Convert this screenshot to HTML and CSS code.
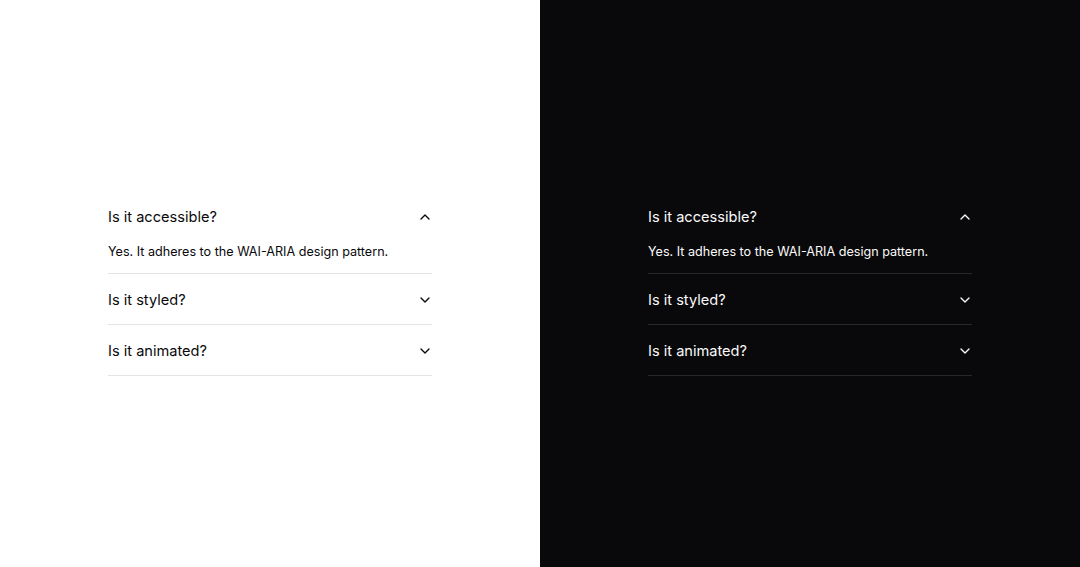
FILE: index.html
```html
<!DOCTYPE html>
<html>
<head>
<meta charset="utf-8">
<link rel="stylesheet" href="styles.css">
</head>
<body>
<div class="split">
  <div class="panel light">
    <div class="accordion">
      <div class="item open">
        <div class="trigger"><span>Is it accessible?</span>
          <svg class="chev" viewBox="0 0 24 24"><path d="m18 15-6-6-6 6"/></svg></div>
        <div class="content">Yes. It adheres to the WAI-ARIA design pattern.</div>
      </div>
      <div class="item">
        <div class="trigger"><span>Is it styled?</span>
          <svg class="chev" viewBox="0 0 24 24"><path d="m6 9 6 6 6-6"/></svg></div>
      </div>
      <div class="item">
        <div class="trigger"><span>Is it animated?</span>
          <svg class="chev" viewBox="0 0 24 24"><path d="m6 9 6 6 6-6"/></svg></div>
      </div>
    </div>
  </div>
  <div class="panel dark">
    <div class="accordion">
      <div class="item open">
        <div class="trigger"><span>Is it accessible?</span>
          <svg class="chev" viewBox="0 0 24 24"><path d="m18 15-6-6-6 6"/></svg></div>
        <div class="content">Yes. It adheres to the WAI-ARIA design pattern.</div>
      </div>
      <div class="item">
        <div class="trigger"><span>Is it styled?</span>
          <svg class="chev" viewBox="0 0 24 24"><path d="m6 9 6 6 6-6"/></svg></div>
      </div>
      <div class="item">
        <div class="trigger"><span>Is it animated?</span>
          <svg class="chev" viewBox="0 0 24 24"><path d="m6 9 6 6 6-6"/></svg></div>
      </div>
    </div>
  </div>
</div>
</body>
</html>
```
FILE: styles.css
```css
html, body { margin: 0; padding: 0; }
body { font-family: Inter, "Noto Sans", sans-serif; }
.split { display: flex; width: 1080px; height: 567px; }
.panel { flex: 1; display: flex; align-items: center; justify-content: center; }
.light { background: #ffffff; color: #09090b; --border: #e4e4e7; }
.dark { background: #09090b; color: #fafafa; --border: #27272a; }
.accordion { width: 324px; }
.item { border-bottom: 1px solid var(--border); }
.trigger { display: flex; align-items: center; justify-content: space-between; height: 50px; font-size: 14.6px; font-weight: 400; line-height: 20px; padding-top: 2px; box-sizing: border-box; }
.chev { width: 16px; height: 16px; margin-top: -1px; margin-right: -1px; fill: none; stroke: currentColor; stroke-width: 2; stroke-linecap: round; stroke-linejoin: round; }
.content { font-size: 12.6px; line-height: 18px; padding-top: 2px; padding-bottom: 12px; }
```
